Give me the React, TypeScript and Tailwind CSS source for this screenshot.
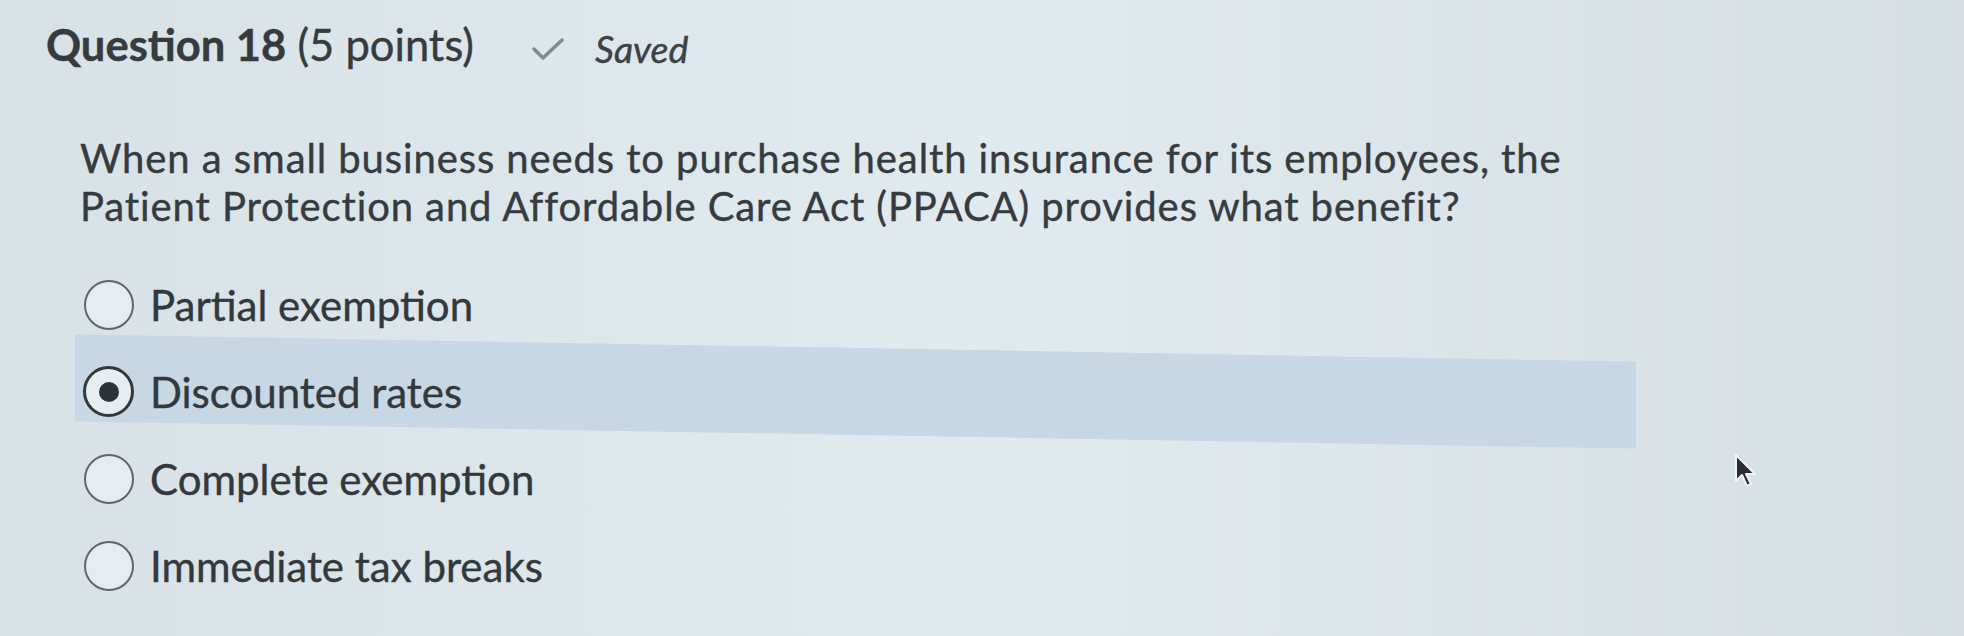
import React from "react";

const OPTIONS = [
  { label: "Partial exemption", checked: false },
  { label: "Discounted rates", checked: true },
  { label: "Complete exemption", checked: false },
  { label: "Immediate tax breaks", checked: false },
];

function Radio({ checked }: { checked: boolean }) {
  if (checked) {
    return (
      <span className="relative flex h-[51px] w-[51px] shrink-0 items-center justify-center rounded-full border-[3px] border-[#33383b] bg-[#e6eef2]">
        <span className="h-[20px] w-[20px] rounded-full bg-[#2e3336]" />
      </span>
    );
  }
  return (
    <span className="h-[50px] w-[50px] shrink-0 rounded-full border-2 border-[#5f666a] bg-[#e4ecf0]" />
  );
}

function Cursor() {
  return (
    <svg
      className="absolute left-[1733px] top-[453px] blur-[0.6px]"
      width="30"
      height="38"
      viewBox="0 0 30 38"
    >
      <path
        d="M3 2 L3 28 L9 22 L14 33 L18 31 L13 21 L22 21 Z"
        fill="#2a2e31"
        stroke="#f2f5f7"
        strokeWidth="2"
        strokeLinejoin="round"
      />
    </svg>
  );
}

export default function App() {
  return (
    <div className="relative h-[636px] w-[1964px] overflow-hidden bg-gradient-to-r from-[#d7e1e6] via-[#e1eaef] to-[#d5dee3] font-['Lato','Noto_Sans',sans-serif] text-[#353b3f] [-webkit-text-stroke:0.4px_#353b3f]">
      {/* Header */}
      <div className="flex items-center pl-[46px] pt-[11px]">
        <h2 className="text-[43.5px] leading-[56px]">
          <span className="font-bold">Question 18</span> (5 points)
        </h2>
        <svg className="ml-[57px] mt-[10px]" width="34" height="24" viewBox="0 0 34 24">
          <path
            d="M3 12 L12 21 L31 3"
            fill="none"
            stroke="#7f8b90"
            strokeWidth="3.5"
            strokeLinecap="round"
            strokeLinejoin="round"
          />
        </svg>
        <span className="ml-[30px] mt-[10px] text-[37.5px] italic text-[#3c4246]">Saved</span>
      </div>

      {/* Question */}
      <div className="mt-[57px] pl-[80px] text-[40px] leading-[48px] tracking-[0.9px]">
        <p>When a small business needs to purchase health insurance for its employees, the</p>
        <p>Patient Protection and Affordable Care Act (PPACA) provides what benefit?</p>
      </div>

      {/* Options */}
      <div className="mt-[31px] flex flex-col">
        {OPTIONS.map((o) =>
          o.checked ? (
            <div
              key={o.label}
              className="relative ml-[75px] flex h-[87px] w-[1561px] items-center gap-[16px] pl-[8px]"
            >
              <span className="absolute inset-0 skew-y-[1deg] bg-[#c7d7e3]" />
              <span className="relative">
                <Radio checked />
              </span>
              <span className="relative text-[42px] leading-none text-[#32383b]">{o.label}</span>
            </div>
          ) : (
            <div key={o.label} className="flex h-[87px] items-center gap-[16px] pl-[84px]">
              <Radio checked={false} />
              <span className="text-[42px] leading-none text-[#32383b]">{o.label}</span>
            </div>
          )
        )}
      </div>

      <Cursor />
    </div>
  );
}
